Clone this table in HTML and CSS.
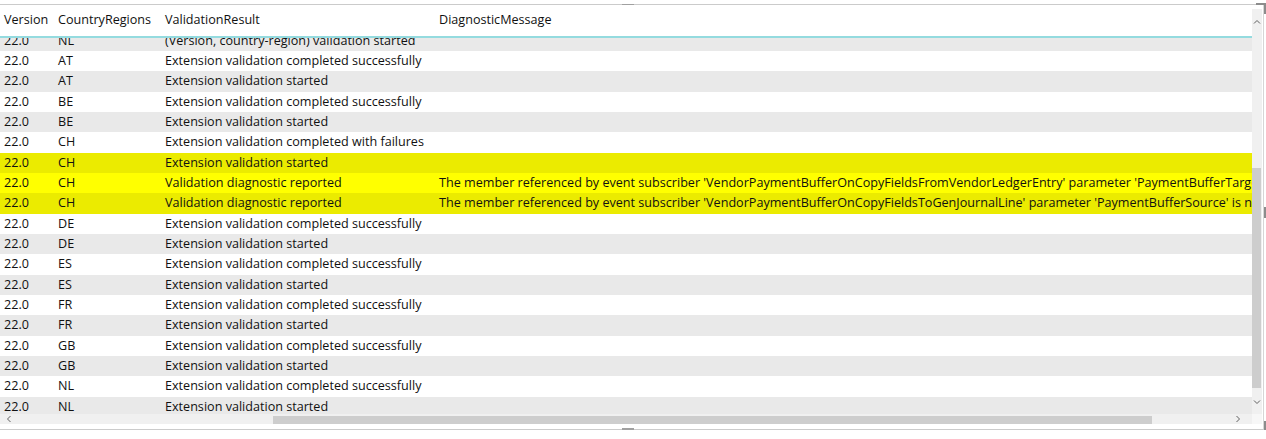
FILE: index.html
```html
<!DOCTYPE html>
<html>
<head>
<meta charset="utf-8">
<link rel="stylesheet" href="styles.css">
</head>
<body>
<div class="frame">
  <div class="main">
    <div class="grid">
      <div class="header cols">
        <div class="c">Version</div>
        <div class="c">CountryRegions</div>
        <div class="c">ValidationResult</div>
        <div class="c">DiagnosticMessage</div>
      </div>
      <div class="rows">
        <div class="row cols alt first"><div class="c">22.0</div><div class="c">NL</div><div class="c">(Version, country-region) validation started</div><div class="c"></div></div>
        <div class="row cols"><div class="c">22.0</div><div class="c">AT</div><div class="c">Extension validation completed successfully</div><div class="c"></div></div>
        <div class="row cols alt"><div class="c">22.0</div><div class="c">AT</div><div class="c">Extension validation started</div><div class="c"></div></div>
        <div class="row cols"><div class="c">22.0</div><div class="c">BE</div><div class="c">Extension validation completed successfully</div><div class="c"></div></div>
        <div class="row cols alt"><div class="c">22.0</div><div class="c">BE</div><div class="c">Extension validation started</div><div class="c"></div></div>
        <div class="row cols"><div class="c">22.0</div><div class="c">CH</div><div class="c">Extension validation completed with failures</div><div class="c"></div></div>
        <div class="row cols alt hl"><div class="c">22.0</div><div class="c">CH</div><div class="c">Extension validation started</div><div class="c"></div></div>
        <div class="row cols hl"><div class="c">22.0</div><div class="c">CH</div><div class="c">Validation diagnostic reported</div><div class="c">The member referenced by event subscriber 'VendorPaymentBufferOnCopyFieldsFromVendorLedgerEntry' parameter 'PaymentBufferTarget' is not found in the target.</div></div>
        <div class="row cols alt hl"><div class="c">22.0</div><div class="c">CH</div><div class="c">Validation diagnostic reported</div><div class="c">The member referenced by event subscriber 'VendorPaymentBufferOnCopyFieldsToGenJournalLine' parameter 'PaymentBufferSource' is not found in the target.</div></div>
        <div class="row cols"><div class="c">22.0</div><div class="c">DE</div><div class="c">Extension validation completed successfully</div><div class="c"></div></div>
        <div class="row cols alt"><div class="c">22.0</div><div class="c">DE</div><div class="c">Extension validation started</div><div class="c"></div></div>
        <div class="row cols"><div class="c">22.0</div><div class="c">ES</div><div class="c">Extension validation completed successfully</div><div class="c"></div></div>
        <div class="row cols alt"><div class="c">22.0</div><div class="c">ES</div><div class="c">Extension validation started</div><div class="c"></div></div>
        <div class="row cols"><div class="c">22.0</div><div class="c">FR</div><div class="c">Extension validation completed successfully</div><div class="c"></div></div>
        <div class="row cols alt"><div class="c">22.0</div><div class="c">FR</div><div class="c">Extension validation started</div><div class="c"></div></div>
        <div class="row cols"><div class="c">22.0</div><div class="c">GB</div><div class="c">Extension validation completed successfully</div><div class="c"></div></div>
        <div class="row cols alt"><div class="c">22.0</div><div class="c">GB</div><div class="c">Extension validation started</div><div class="c"></div></div>
        <div class="row cols"><div class="c">22.0</div><div class="c">NL</div><div class="c">Extension validation completed successfully</div><div class="c"></div></div>
        <div class="row cols alt"><div class="c">22.0</div><div class="c">NL</div><div class="c">Extension validation started</div><div class="c"></div></div>
      </div>
      <div class="hscroll">
        <div class="harrow"><svg width="8" height="8" viewBox="0 0 8 8"><path d="M5.5 1 L2.5 4 L5.5 7" fill="none" stroke="#606060" stroke-width="1"/></svg></div>
        <div class="htrack"><div class="hthumb"></div></div>
        <div class="harrow"><svg width="8" height="8" viewBox="0 0 8 8"><path d="M2.5 1 L5.5 4 L2.5 7" fill="none" stroke="#606060" stroke-width="1"/></svg></div>
        <div class="hpad"></div>
      </div>
    </div>
    <div class="side">
      <div class="vscroll">
        <div class="varrow up"><svg width="8" height="8" viewBox="0 0 8 8"><path d="M1 5.5 L4 2.5 L7 5.5" fill="none" stroke="#606060" stroke-width="1"/></svg></div>
        <div class="vtrack"><div class="vthumb"></div></div>
        <div class="varrow down"><svg width="8" height="8" viewBox="0 0 8 8"><path d="M1 2.5 L4 5.5 L7 2.5" fill="none" stroke="#606060" stroke-width="1"/></svg></div>
      </div>
      <div class="corner"></div>
    </div>
  </div>
  <div class="grip grip-top"></div>
  <div class="grip grip-bottom"></div>
  <div class="edge-mark"></div>
  <div class="cornermark tr"></div>
  <div class="cornermark br"></div>
</div>
</body>
</html>
```

FILE: styles.css
```css
html, body {
  margin: 0;
  padding: 0;
  background: #ffffff;
}
body {
  font-family: "Open Sans", "Liberation Sans", sans-serif;
  font-size: 12.6px;
  color: #111111;
}
.frame {
  position: relative;
  margin-top: 4px;
  width: 1263px;
  height: 424px;
  border-top: 1px solid #cbcbcb;
  border-bottom: 1px solid #cbcbcb;
  border-right: 1px solid #d6d6d6;
}
.main {
  display: flex;
  height: 424px;
}
.grid {
  width: 1252px;
  display: flex;
  flex-direction: column;
  overflow: hidden;
}
.cols {
  display: grid;
  grid-template-columns: 54px 107px 274px 1fr;
}
.c {
  padding-left: 4px;
  white-space: nowrap;
  overflow: hidden;
}
.header {
  box-sizing: border-box;
  height: 33px;
  flex: none;
  align-items: start;
  padding-top: 7px;
  border-bottom: 2px solid #94dbdf;
  position: relative;
  z-index: 2;
  background: #fff;
}
.header .c {
  line-height: 16px;
}
.rows {
  height: 376px;
  flex: none;
  overflow: hidden;
}
.row {
  height: 20.33px;
  line-height: 20.33px;
  background: #ffffff;
}
.row.first {
  margin-top: -7.4px;
}
.row.alt {
  background: #e9e9e9;
}
.row.hl {
  background: #ffff00;
}
.row.alt.hl {
  background: #ebeb00;
}
.hscroll {
  height: 10px;
  flex: none;
  display: flex;
  align-items: stretch;
  background: #f0f0f0;
}
.harrow {
  width: 17px;
  display: flex;
  align-items: center;
  justify-content: center;
}
.htrack {
  flex: 1;
  padding-top: 2px;
}
.hthumb {
  margin-left: 256px;
  width: 879px;
  height: 8px;
  background: #cdcdcd;
}
.hpad {
  width: 6px;
}
.side {
  width: 10px;
  padding-top: 4px;
  display: flex;
  flex-direction: column;
}
.vscroll {
  height: 405px;
  background: #f0f0f0;
  display: flex;
  flex-direction: column;
}
.varrow {
  display: flex;
  align-items: center;
  justify-content: center;
}
.varrow.up {
  height: 26px;
}
.varrow.down {
  height: 25px;
}
.vtrack {
  flex: 1;
}
.vthumb {
  margin-top: 133px;
  width: 9px;
  height: 220px;
  background: #cdcdcd;
}
.corner {
  height: 10px;
  background: #f7f7f7;
}
.grip {
  position: absolute;
  left: 622px;
  width: 12px;
  height: 3px;
  background: #a0a0a0;
}
.grip-top {
  top: -1px;
}
.grip-bottom {
  bottom: -2px;
}
.edge-mark {
  position: absolute;
  right: -3px;
  top: 202px;
  width: 2px;
  height: 11px;
  background: #8c8c8c;
}
.cornermark {
  position: absolute;
  right: -3px;
  width: 8px;
  height: 9px;
}
.cornermark.tr {
  top: -2px;
  border-top: 2px solid #8c8c8c;
  border-right: 2px solid #8c8c8c;
}
.cornermark.br {
  bottom: -3px;
  border-bottom: 2px solid #8c8c8c;
  border-right: 2px solid #8c8c8c;
}
```
